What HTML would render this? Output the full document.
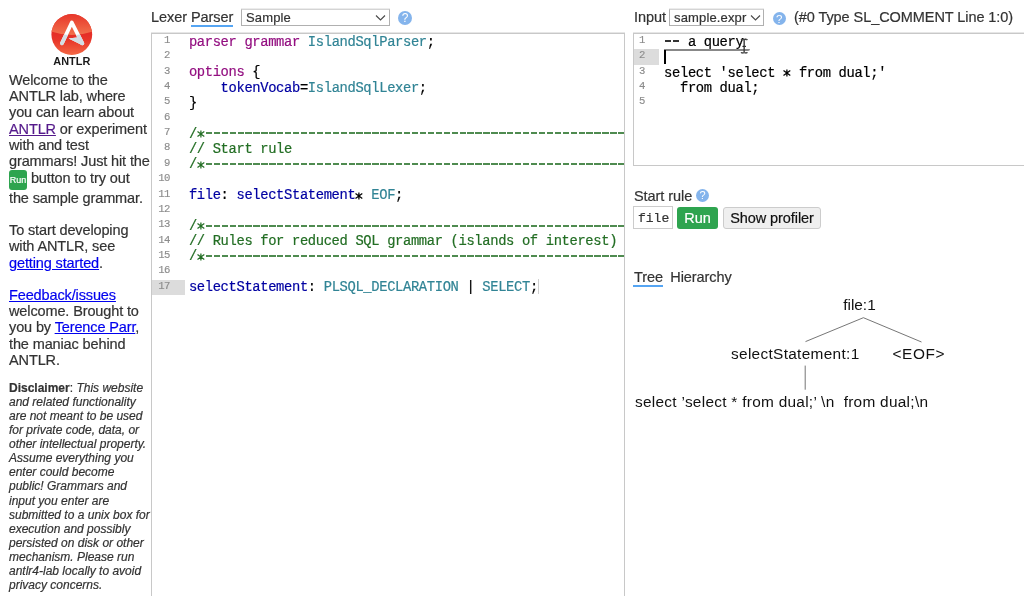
<!DOCTYPE html>
<html><head><meta charset="utf-8">
<style>
*{box-sizing:border-box}
html,body{margin:0;padding:0;background:#fff;width:1024px;height:596px;overflow:hidden;position:relative;font-family:"Liberation Sans",sans-serif;color:#333}
.abs{position:absolute}
#side{position:absolute;left:9px;top:72px;width:150px;font-size:14.5px;line-height:16.2px;white-space:nowrap;letter-spacing:-0.125px}
#side a{color:#0000ee;text-decoration:underline}
#side a.v{color:#551a8b}
.runmini{display:inline-block;vertical-align:baseline;background:#2ea44f;color:#fff;font-size:9px;letter-spacing:0;width:18px;height:20.5px;border-radius:3px;text-align:center;line-height:20.6px;position:relative;top:-0.6px;overflow:visible;white-space:nowrap;margin-top:1px;margin-bottom:-1px}
#disc{position:absolute;left:9px;top:381px;width:150px;font-size:12px;line-height:14.06px;white-space:nowrap}
.hdr{font-size:14.5px;color:#333;white-space:nowrap;letter-spacing:-0.07px}
.sel{position:absolute;border:1px solid #b0b0b0;border-top-color:#d4d4d4;box-shadow:0 -1px 0 #ececec;background:#fff;font-size:13px;color:#333;letter-spacing:0.15px}
.help{position:absolute;border-radius:50%;background:#84b4ec;color:#fff;text-align:center;-webkit-text-stroke:0}
.ed{position:absolute;border:1px solid #c8c8c8;box-shadow:0 -1px 0 #e6e6e6;background:#fff;overflow:hidden}
.code{position:absolute;font-family:"Liberation Mono",monospace;font-size:13.8px;letter-spacing:-0.35px;white-space:pre;color:#000}
.ln{position:absolute;height:15.35px;line-height:15.35px}
.g{position:absolute;font-family:"Liberation Mono",monospace;font-size:10.6px;letter-spacing:-0.45px;color:#8c8c8c;text-align:right;height:15.35px;line-height:12.6px;-webkit-text-stroke:0.15px #8c8c8c}
.ast{display:inline-block;position:relative;width:7.93px;height:0}
.dash{position:absolute;height:15.35px;width:460px;background:repeating-linear-gradient(to right,transparent 0,transparent 0.8px,rgba(35,110,36,.8) 0.8px,rgba(35,110,36,.8) 7.1px,transparent 7.1px,transparent 7.93px) 0 6.1px/100% 2px no-repeat}
.dashk{position:absolute;height:15.35px;background:repeating-linear-gradient(to right,transparent 0,transparent 0.8px,rgba(0,0,0,.8) 0.8px,rgba(0,0,0,.8) 7.1px,transparent 7.1px,transparent 7.93px) 0 6.1px/100% 2px no-repeat}
.kw{color:#930f80}.var{color:#318495}.fn{color:#0000a2}.cm{color:#236e24}
#wrap{position:absolute;left:0;top:0;width:1024px;height:596px;will-change:transform;-webkit-text-stroke:0.2px currentColor}
</style></head><body><div id="wrap">

<!-- logo -->
<svg class="abs" style="left:0;top:0" width="150" height="70" viewBox="0 0 150 70">
<defs>
<linearGradient id="lt" gradientUnits="userSpaceOnUse" x1="0" y1="14" x2="0" y2="36"><stop offset="0" stop-color="#e7362a"/><stop offset="1" stop-color="#f2754f"/></linearGradient>
<linearGradient id="lb" gradientUnits="userSpaceOnUse" x1="0" y1="33" x2="0" y2="55"><stop offset="0" stop-color="#e52d27"/><stop offset="0.35" stop-color="#e8372a"/><stop offset="1" stop-color="#f36845"/></linearGradient>
<clipPath id="cc"><circle cx="71.8" cy="34.5" r="20.4"/></clipPath>
<clipPath id="low"><path d="M50 31.2 Q71.8 38.8 94 31.2 L94 60 L50 60Z"/></clipPath>
<g id="A">
<path d="M62 43.2 L71.8 22.5 L82.3 43.3" fill="none" stroke-width="3.8" stroke-linecap="round" stroke-linejoin="round"/>
<path d="M68.6 38.5 L76.9 37.6 L84 43.4 Q83.6 45.4 81.8 44.9Z" stroke="none"/>
</g>
</defs>
<g clip-path="url(#cc)">
<rect x="50" y="13" width="44" height="44" fill="url(#lb)"/>
<path d="M50 10 L94 10 L94 31.2 Q71.8 38.8 50 31.2Z" fill="url(#lt)"/>
</g>
<use href="#A" fill="#fff" stroke="#fff"/>
<g clip-path="url(#low)"><use href="#A" fill="#d3dee5" stroke="#d3dee5"/></g>
<text x="53.3" y="65.3" font-family="Liberation Sans" font-weight="bold" font-size="11" fill="#1a1a1a" textLength="37" lengthAdjust="spacingAndGlyphs">ANTLR</text>
</svg>

<div id="side">Welcome to the<br>ANTLR lab, where<br>you can learn about<br><a class="v">ANTLR</a> or experiment<br>with and test<br>grammars! Just hit the<br><span class="runmini">Run</span> button to try out<br>the sample grammar.<br><br>To start developing<br>with ANTLR, see<br><a>getting started</a>.<br><br><a>Feedback/issues</a><br>welcome. Brought to<br>you by <a>Terence Parr</a>,<br>the maniac behind<br>ANTLR.</div>

<div id="disc"><b>Disclaimer</b>: <i>This website<br>and related functionality<br>are not meant to be used<br>for private code, data, or<br>other intellectual property.<br>Assume everything you<br>enter could become<br>public! Grammars and<br>input you enter are<br>submitted to a unix box for<br>execution and possibly<br>persisted on disk or other<br>mechanism. Please run<br>antlr4-lab locally to avoid<br>privacy concerns.</i></div>

<!-- grammar header -->
<div class="abs hdr" style="left:151px;top:9px">Lexer</div>
<div class="abs hdr" style="left:191px;top:9px">Parser</div>
<div class="abs" style="left:191px;top:25px;width:42px;height:2px;background:#55a5f3"></div>
<div class="sel" style="left:241px;top:9px;width:149px;height:17px"><span class="abs" style="left:4px;top:0px">Sample</span>
<svg class="abs" style="left:133.3px;top:3.6px" width="11" height="8"><path d="M1 1.5 L5.5 6 L10 1.5" stroke="#4a4a4a" stroke-width="1.15" fill="none"/></svg></div>
<div class="help" style="left:398px;top:11.3px;width:14px;height:14px;font-size:12px;line-height:14.5px">?</div>

<div class="ed" id="ged" style="left:151px;top:33px;width:474px;height:580px">
<div class="abs" style="left:0;top:245.60px;width:33px;height:15.35px;background:#dcdcdc"></div>
<div class="g" style="left:0;width:18px;top:0.00px">1</div>
<div class="ln code" style="left:36.9px;top:0.70px"><span class="kw">parser</span> <span class="kw">grammar</span> <span class="var">IslandSqlParser</span>;</div>
<div class="g" style="left:0;width:18px;top:15.35px">2</div>
<div class="g" style="left:0;width:18px;top:30.70px">3</div>
<div class="ln code" style="left:36.9px;top:31.38px"><span class="kw">options</span> {</div>
<div class="g" style="left:0;width:18px;top:46.05px">4</div>
<div class="ln code" style="left:36.9px;top:46.72px">    <span class="fn">tokenVocab</span>=<span class="var">IslandSqlLexer</span>;</div>
<div class="g" style="left:0;width:18px;top:61.40px">5</div>
<div class="ln code" style="left:36.9px;top:62.06px">}</div>
<div class="g" style="left:0;width:18px;top:76.75px">6</div>
<div class="g" style="left:0;width:18px;top:92.10px">7</div>
<div class="ln code" style="left:36.9px;top:92.74px"><span class="cm">/<span class="ast"><svg width="8" height="8" style="position:absolute;left:0;top:-7.3px"><path d="M3.9 0.4V7.6M0.5 1.6L7.3 6.4M0.5 6.4L7.3 1.6" stroke="currentColor" stroke-width="1.25"/></svg></span></span></div>
<div class="dash" style="left:52.76px;top:92.40px"></div>
<div class="g" style="left:0;width:18px;top:107.45px">8</div>
<div class="ln code" style="left:36.9px;top:108.08px"><span class="cm">// Start rule</span></div>
<div class="g" style="left:0;width:18px;top:122.80px">9</div>
<div class="ln code" style="left:36.9px;top:123.42px"><span class="cm">/<span class="ast"><svg width="8" height="8" style="position:absolute;left:0;top:-7.3px"><path d="M3.9 0.4V7.6M0.5 1.6L7.3 6.4M0.5 6.4L7.3 1.6" stroke="currentColor" stroke-width="1.25"/></svg></span></span></div>
<div class="dash" style="left:52.76px;top:123.10px"></div>
<div class="g" style="left:0;width:18px;top:138.15px">10</div>
<div class="g" style="left:0;width:18px;top:153.50px">11</div>
<div class="ln code" style="left:36.9px;top:154.10px"><span class="fn">file</span>: <span class="fn">selectStatement</span><span class="ast"><svg width="8" height="8" style="position:absolute;left:0;top:-7.3px"><path d="M3.9 0.4V7.6M0.5 1.6L7.3 6.4M0.5 6.4L7.3 1.6" stroke="currentColor" stroke-width="1.25"/></svg></span> <span class="var">EOF</span>;</div>
<div class="g" style="left:0;width:18px;top:168.85px">12</div>
<div class="g" style="left:0;width:18px;top:184.20px">13</div>
<div class="ln code" style="left:36.9px;top:184.78px"><span class="cm">/<span class="ast"><svg width="8" height="8" style="position:absolute;left:0;top:-7.3px"><path d="M3.9 0.4V7.6M0.5 1.6L7.3 6.4M0.5 6.4L7.3 1.6" stroke="currentColor" stroke-width="1.25"/></svg></span></span></div>
<div class="dash" style="left:52.76px;top:184.50px"></div>
<div class="g" style="left:0;width:18px;top:199.55px">14</div>
<div class="ln code" style="left:36.9px;top:200.12px"><span class="cm">// Rules for reduced SQL grammar (islands of interest)</span></div>
<div class="g" style="left:0;width:18px;top:214.90px">15</div>
<div class="ln code" style="left:36.9px;top:215.46px"><span class="cm">/<span class="ast"><svg width="8" height="8" style="position:absolute;left:0;top:-7.3px"><path d="M3.9 0.4V7.6M0.5 1.6L7.3 6.4M0.5 6.4L7.3 1.6" stroke="currentColor" stroke-width="1.25"/></svg></span></span></div>
<div class="dash" style="left:52.76px;top:215.20px"></div>
<div class="g" style="left:0;width:18px;top:230.25px">16</div>
<div class="g" style="left:0;width:18px;top:245.60px">17</div>
<div class="ln code" style="left:36.9px;top:246.14px"><span class="fn">selectStatement</span>: <span class="var">PLSQL_DECLARATION</span> | <span class="var">SELECT</span>;</div>
<div class="abs" style="left:385.6px;top:245.10px;width:1.7px;height:14.6px;background:#cfcfcf"></div>
</div>

<!-- input header -->
<div class="abs hdr" style="left:634px;top:9px">Input</div>
<div class="sel" style="left:669px;top:9px;width:95px;height:17px"><span class="abs" style="left:4px;top:0px">sample.expr</span>
<svg class="abs" style="left:80px;top:4px" width="11" height="8"><path d="M1 1.5 L5.5 6 L10 1.5" stroke="#4a4a4a" stroke-width="1.15" fill="none"/></svg></div>
<div class="help" style="left:772.5px;top:11.5px;width:13.5px;height:13.5px;font-size:11.5px;line-height:14px">?</div>
<div class="abs hdr" style="left:794px;top:9px">(#0 Type SL_COMMENT Line 1:0)</div>

<div class="ed" id="ied" style="left:633px;top:33px;width:420px;height:133px">
<div class="abs" style="left:0;top:15.35px;width:25px;height:15.35px;background:#dcdcdc"></div>
<div class="g" style="left:0;width:11px;top:0.00px">1</div>
<div class="ln code" style="left:30.1px;top:1.00px">   a query</div>
<div class="g" style="left:0;width:11px;top:15.35px">2</div>
<div class="g" style="left:0;width:11px;top:30.70px">3</div>
<div class="ln code" style="left:30.1px;top:31.68px">select 'select <span class="ast"><svg width="8" height="8" style="position:absolute;left:0;top:-7.3px"><path d="M3.9 0.4V7.6M0.5 1.6L7.3 6.4M0.5 6.4L7.3 1.6" stroke="currentColor" stroke-width="1.25"/></svg></span> from dual;'</div>
<div class="g" style="left:0;width:11px;top:46.05px">4</div>
<div class="ln code" style="left:30.1px;top:47.02px">  from dual;</div>
<div class="g" style="left:0;width:11px;top:61.40px">5</div>
<div class="dashk" style="left:30.1px;top:0.3px;width:15.86px"></div>
<div class="abs" style="left:30px;top:14.7px;width:86px;height:2px;background:#888;border-radius:0 0 2px 0"></div>
<div class="abs" style="left:30px;top:16px;width:2px;height:14px;background:#000"></div>
</div>
<svg class="abs" style="left:738px;top:36px" width="14" height="20"><g fill="none" stroke-linecap="round"><path d="M3.4 3.6 Q5.6 2.8 6.2 4 Q6.8 2.8 9 3.6 M6.2 4 V16.6 M3.4 16.6 Q5.6 17.4 6.2 16.2 Q6.8 17.4 9 16.6 M5 10.3 H7.4" stroke="#111" stroke-width="1.3"/><path d="M3.4 3.6 Q5.6 2.8 6.2 4 Q6.8 2.8 9 3.6 M6.2 4 V16.6 M3.4 16.6 Q5.6 17.4 6.2 16.2 Q6.8 17.4 9 16.6" stroke="#aaa" stroke-width="0.4"/></g></svg>
<!-- start rule -->
<div class="abs hdr" style="left:634px;top:188px">Start rule</div>
<div class="help" style="left:696px;top:189px;width:13px;height:13px;font-size:11px;line-height:13.5px">?</div>
<div class="abs" style="left:633px;top:206px;width:40px;height:23px;border:1px solid #ccc;font-family:'Liberation Mono',monospace;font-size:13px;color:#333;padding-left:4px;line-height:23px">file</div>
<div class="abs" style="left:677px;top:207px;width:41px;height:22px;background:#2ea44f;border-radius:3px;color:#fff;font-size:14.5px;text-align:center;line-height:22px;letter-spacing:-0.07px">Run</div>
<div class="abs" style="left:723px;top:207px;width:98px;height:22px;background:#efefef;border:1px solid #ccc;border-radius:3px;color:#111;font-size:14.5px;text-align:center;line-height:20px;letter-spacing:-0.07px">Show profiler</div>

<!-- tree tabs -->
<div class="abs hdr" style="left:634px;top:269px">Tree</div>
<div class="abs" style="left:633.4px;top:285px;width:29.2px;height:2px;background:#55a5f3"></div>
<div class="abs hdr" style="left:670.3px;top:269px">Hierarchy</div>

<!-- tree -->
<svg class="abs" style="left:624px;top:290px" width="400" height="130">
<g stroke="#666" stroke-width="0.9">
<line x1="239.4" y1="27.7" x2="181.5" y2="51.6"/>
<line x1="239.4" y1="27.7" x2="297.5" y2="52"/>
<line x1="181.2" y1="75.6" x2="181.2" y2="99.7"/>
</g>
<g font-family="Liberation Sans" font-size="15.4" fill="#111" style="white-space:pre">
<text x="219.2" y="19.8">file:1</text>
<text x="107" y="68.6" textLength="128.2" lengthAdjust="spacing">selectStatement:1</text>
<text x="268.4" y="68.6" textLength="52.2" lengthAdjust="spacing">&lt;EOF&gt;</text>
<text x="11" y="116.9" textLength="293" lengthAdjust="spacing">select ’select * from dual;’ \n&#160; from dual;\n</text>
</g>
</svg>

</div></body></html>
